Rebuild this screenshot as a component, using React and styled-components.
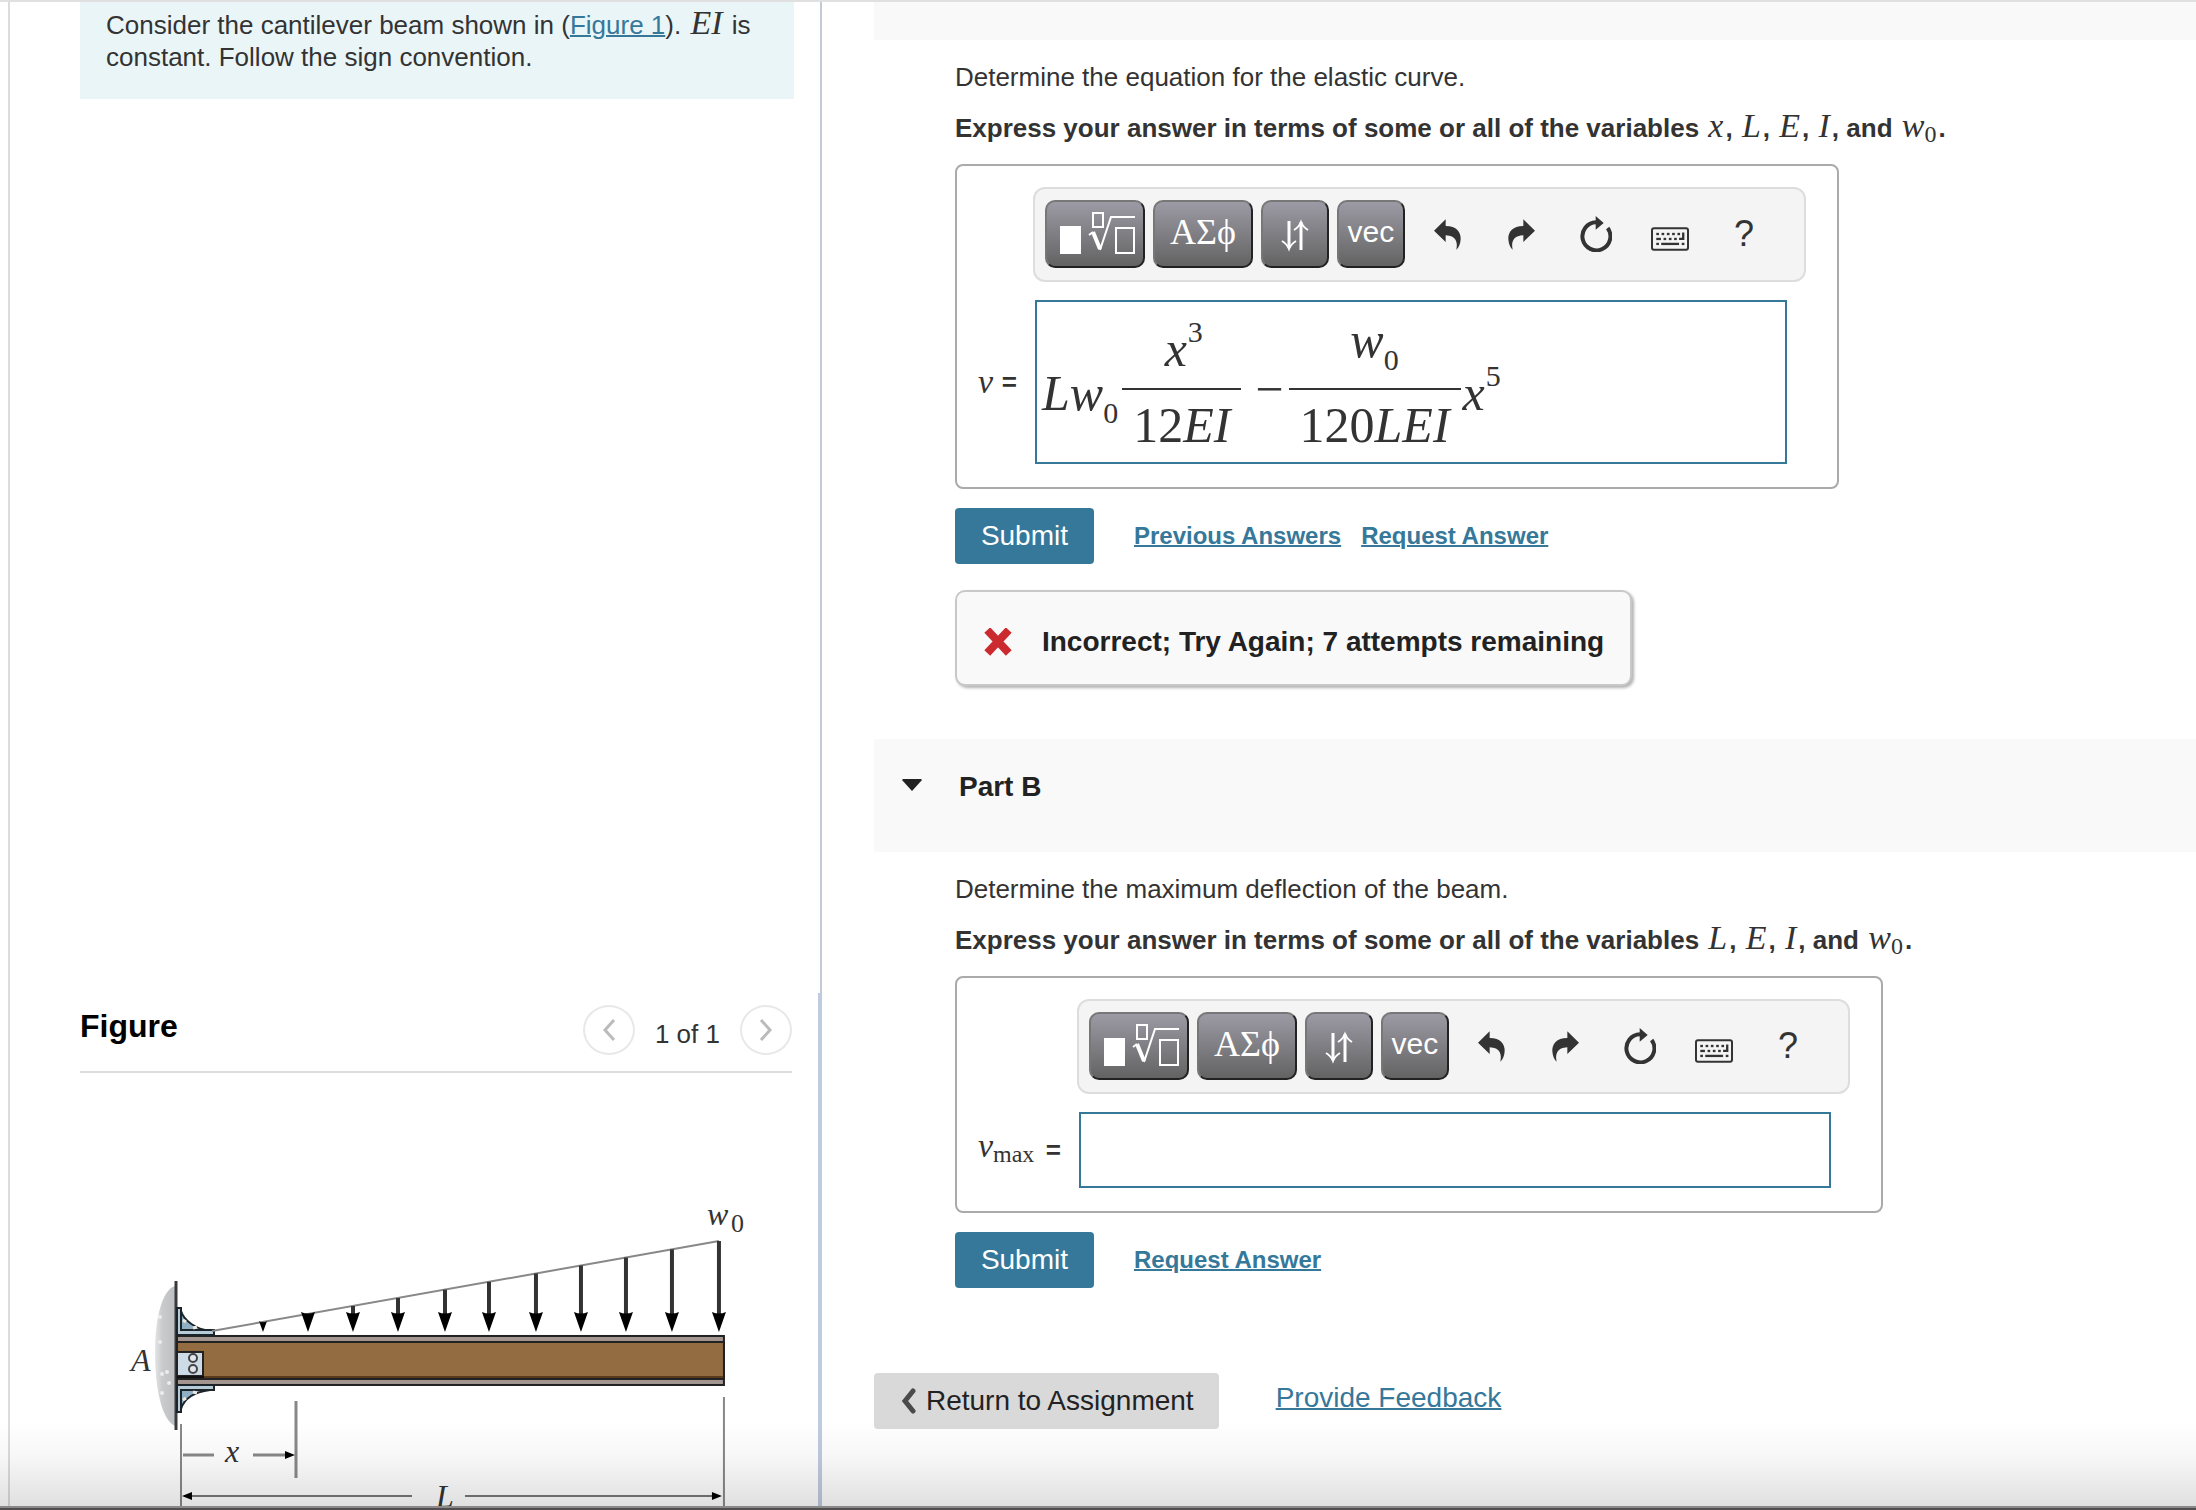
import React from "react";
import styled, { createGlobalStyle } from "styled-components";

const GlobalStyle = createGlobalStyle`
  * {
    box-sizing: border-box;
  }
  body {
    margin: 0;
    font-family: "Liberation Sans", Arial, sans-serif;
    font-size: 26px;
    line-height: 32px;
    color: #333;
    background-color: #fff;
  }
  button, input {
    font-family: inherit;
  }
`;

const Page = styled.div`
  position: relative;
  height: 100vh;
  display: flex;
  flex-direction: column;
  overflow: hidden;
  border-top: 2px solid #e0e0e0;
`;
const Workspace = styled.div`
  flex: 1;
  min-height: 0;
  display: grid;
  grid-template-columns: 37.43% 1fr;
  overflow: hidden;
`;
const DockEdge = styled.div`
  height: 4px;
  background-color: #524e50;
  border-top: 2px solid #8a8a8a;
`;
const DockShade = styled.div`
  position: absolute;
  left: 0;
  right: 0;
  bottom: 4px;
  height: 84px;
  pointer-events: none;
  background: linear-gradient(
    rgba(0, 0, 0, 0),
    rgba(0, 0, 0, 0.03) 40%,
    rgba(0, 0, 0, 0.12)
  );
`;

/* left side */
const LeftPane = styled.aside`
  min-height: 0;
  margin-left: 8px;
  border-left: 2px solid #dcdcdc;
  display: flex;
  flex-direction: column;
`;
const ProblemSection = styled.section`
  flex: 0 0 65.9%;
  padding: 0 26px 0 70px;
  border-right: 2px solid #c2cbd4;
`;
const ProblemText = styled.p`
  margin: 0;
  padding: 7px 26px 26px;
  background-color: #eaf5f8;
`;
const FigureSection = styled.section`
  flex: 1;
  min-height: 0;
  overflow: hidden;
  padding: 12px 26px 0 70px;
  border-right: 4px solid #bfcbdf;
`;
const FigureHeader = styled.div`
  display: flex;
  justify-content: space-between;
  padding-bottom: 16px;
  border-bottom: 2px solid #ddd;
`;
const FigureTitle = styled.h2`
  margin: 0;
  font-size: 32px;
  line-height: 42px;
  color: #000;
`;
const Pager = styled.div`
  display: flex;
  gap: 20px;
`;
const PagerButton = styled.button`
  width: 52px;
  height: 50px;
  padding: 0;
  display: flex;
  align-items: center;
  justify-content: center;
  border: 2px solid #e8e8e8;
  border-radius: 50%;
  background-color: #fff;
`;
const PagerText = styled.span`
  padding-top: 13px;
`;
const BeamDrawing = styled.svg`
  display: block;
  width: 100%;
  margin-top: 117px;
  font-family: "Liberation Serif", "Times New Roman", serif;
`;

/* right side */
const RightPane = styled.main`
  min-width: 0;
  padding-left: 52px;
`;
const PartStrip = styled.div`
  height: 38px;
  background-color: #f9f9f9;
`;
const PartHeader = styled.button`
  width: 100%;
  margin-top: 53px;
  padding: 32px 28px 49px;
  display: flex;
  gap: 37px;
  border: none;
  background-color: #f9f9f9;
  color: #222;
  font-size: 28px;
  font-weight: bold;
  line-height: 32px;
  text-align: left;
`;
const Caret = styled.svg`
  width: 20px;
  height: 12px;
  margin-top: 8px;
`;
const PartBody = styled.section`
  padding: 21px 0 0 81px;
`;
const Question = styled.p`
  margin: 0;
`;
const Instruction = styled.p`
  margin: 19px 0 20px;
  font-weight: bold;
`;
const Var = styled.i`
  padding: 0 2px;
  font-family: "Liberation Serif", "Times New Roman", serif;
  font-size: 34px;
  font-weight: normal;
  line-height: 0;
`;
const VarSub = styled.sub`
  font-size: 24px;
  font-style: normal;
  line-height: 0;
  vertical-align: -5px;
`;
const TextLink = styled.a`
  color: #367899;
  font-size: ${(props) => props.$size || 26}px;
  font-weight: ${(props) => (props.$bold ? "bold" : "normal")};
  text-decoration: underline;
  text-decoration-thickness: 2px;
`;

const AnswerBox = styled.div`
  width: fit-content;
  padding: 21px 31px 23px 21px;
  display: grid;
  grid-template-columns: auto auto;
  gap: 18px 16px;
  border: 2px solid #aaa;
  border-radius: 8px;
`;
const Toolbar = styled.div`
  grid-column: 2;
  padding: 11px 21px 12px 10px;
  display: flex;
  gap: 8px;
  border: 2px solid #ddd;
  border-radius: 12px;
  background-color: #f4f4f4;
`;
const PaletteButton = styled.button`
  width: ${(props) => (props.$wide ? 100 : 68)}px;
  height: 68px;
  padding: ${(props) => (props.$text ? "0 0 4px" : "0")};
  display: flex;
  align-items: center;
  justify-content: center;
  border: 2px solid;
  border-color: #777 #222 #222 #777;
  border-radius: 10px;
  background: linear-gradient(#9c9aa4, #636363);
  color: #fff;
  font-size: 30px;
`;
const Greek = styled.span`
  font-family: "Liberation Serif", "Times New Roman", serif;
  font-size: 36px;
`;
const IconGroup = styled.div`
  display: flex;
`;
const IconButton = styled.button`
  width: 74px;
  height: 68px;
  padding: 0 4px 0 0;
  display: flex;
  align-items: center;
  justify-content: center;
  border: none;
  background: none;
  color: #333;
  font-size: 36px;
`;
const AnswerLabel = styled.label`
  width: ${(props) => props.$width}px;
  display: flex;
  align-items: center;
  justify-content: space-between;

  ${Var} {
    padding: 0;
  }
`;
const Equals = styled.span`
  font-weight: bold;
`;
const answerField = `
  width: 752px;
  margin-left: 2px;
  border: 2px solid #367899;
  border-radius: 0;
  background-color: #fff;
  color: #333;
  font-family: "Liberation Serif", "Times New Roman", serif;
`;
const AnswerInput = styled.input`
  ${answerField}
  height: 76px;
  padding: 0 5px;
  font-size: 50px;
`;
const Formula = styled.div`
  ${answerField}
  height: 164px;
  padding: 14px 5px 0;
  display: flex;
  align-items: center;
  font-size: 50px;
  line-height: 60px;
`;
const Term = styled.span`
  padding-top: 8px;
`;
const Operator = styled.span`
  padding: 0 1px 0 12px;
`;
const Fraction = styled.span`
  margin: 0 2px 0 4px;
  display: grid;
  grid-template-rows: 1fr 2px 1fr;
  text-align: center;
`;
const Numerator = styled.span`
  padding-bottom: ${(props) => (props.$sub ? 18 : 9)}px;
  padding-left: ${(props) => (props.$sub ? 0 : 4)}px;
  align-self: end;
`;
const FractionBar = styled.span`
  background-color: #333;
`;
const Denominator = styled.span`
  padding: 5px 11px 0;
`;
const Sup = styled.sup`
  margin-left: 1px;
  font-size: 30px;
  line-height: 0;
  vertical-align: 24px;
`;
const Sub = styled.sub`
  font-size: 30px;
  line-height: 0;
  vertical-align: -13px;
`;

const ActionRow = styled.div`
  margin-top: 19px;
  display: flex;
  align-items: center;
  gap: 20px;
`;
const SubmitButton = styled.button`
  width: 139px;
  height: 56px;
  margin-right: 20px;
  border: none;
  border-radius: 4px;
  background-color: #367899;
  color: #fff;
  font-size: 28px;
`;
const Feedback = styled.div`
  width: fit-content;
  margin-top: 26px;
  padding: 34px 26px 26px 27px;
  display: flex;
  align-items: center;
  gap: 30px;
  border: 2px solid #c8c8c8;
  border-radius: 10px;
  box-shadow: 2px 2px 3px rgba(0, 0, 0, 0.3);
  background-color: #f9f9f9;
  color: #222;
  font-size: 28px;
  font-weight: bold;
`;
const Footer = styled.footer`
  margin-top: 85px;
  display: flex;
  align-items: center;
  gap: 57px;
`;
const FeedbackLinkWrap = styled.div`
  padding-bottom: 6px;
`;
const ReturnButton = styled.button`
  height: 56px;
  padding: 0 25px 0 27px;
  display: flex;
  align-items: center;
  gap: 10px;
  border: none;
  border-radius: 4px;
  background-color: #d9d9d9;
  color: #222;
  font-size: 28px;
`;

function TemplateIcon() {
  return (
    <svg width="96" height="64" viewBox="2 2 96 64" fill="none" stroke="#fff">
      <rect x="15" y="26" width="21" height="28" fill="#fff" stroke="none" />
      <rect x="48" y="13" width="10" height="14" strokeWidth="2" />
      <path d="M44 35l4-3" strokeWidth="2" />
      <path d="M48 32l7 17" strokeWidth="4" />
      <path d="M55 50L66 17H90" strokeWidth="2" />
      <rect x="71" y="28" width="18" height="25" strokeWidth="2" />
    </svg>
  );
}

function UpDownIcon() {
  return (
    <svg width="64" height="64" viewBox="2 2 64 64" fill="none" stroke="#fff">
      <path d="M28 21V48M40 50V22" strokeWidth="3" />
      <path d="M21 41Q26 44 28 49Q30 44 35 41" strokeWidth="2" />
      <path d="M33 30Q38 27 40 22Q42 27 47 30" strokeWidth="2" />
    </svg>
  );
}

function UndoIcon({ flip }) {
  return (
    <svg width="27" height="31" viewBox="0 0 81 91" fill="currentColor">
      <path
        transform={flip ? "translate(81 0) scale(-1 1)" : undefined}
        d="M0 34L35 0V20C68 20 81 39 80 59C79 74 75 84 67 91C72 69 66 49 35 48V68Z"
      />
    </svg>
  );
}

function ResetIcon() {
  return (
    <svg width="32" height="36" viewBox="0 0 96 108">
      <path
        d="M48 19A42 42 0 1 0 83 36"
        fill="none"
        stroke="currentColor"
        strokeWidth="12"
      />
      <path d="M47 0L71 21L47 41Z" fill="currentColor" />
    </svg>
  );
}

function KeyboardIcon() {
  return (
    <svg width="38" height="34" viewBox="0 -30 115 101" fill="currentColor">
      <rect
        x="3"
        y="3"
        width="109"
        height="65"
        rx="6"
        fill="none"
        stroke="currentColor"
        strokeWidth="6"
      />
      {[16, 32, 48, 64, 80].map((x) => (
        <rect key={x} x={x} y="17" width="8" height="7" />
      ))}
      {[38, 54, 70].map((x) => (
        <rect key={x} x={x} y="32" width="8" height="7" />
      ))}
      <rect x="16" y="32" width="14" height="7" />
      <path d="M94 16H101V39H85V32H94Z" />
      <rect x="16" y="47" width="8" height="7" />
      <rect x="31" y="47" width="54" height="7" />
      <rect x="93" y="47" width="8" height="7" />
    </svg>
  );
}

function MathToolbar() {
  return (
    <Toolbar role="toolbar" aria-label="Math tools">
      <PaletteButton $wide aria-label="Templates">
        <TemplateIcon />
      </PaletteButton>
      <PaletteButton $wide $text>
        <Greek>ΑΣϕ</Greek>
      </PaletteButton>
      <PaletteButton aria-label="Arrows">
        <UpDownIcon />
      </PaletteButton>
      <PaletteButton $text>vec</PaletteButton>
      <IconGroup>
        <IconButton aria-label="Undo">
          <UndoIcon />
        </IconButton>
        <IconButton aria-label="Redo">
          <UndoIcon flip />
        </IconButton>
        <IconButton aria-label="Reset">
          <ResetIcon />
        </IconButton>
        <IconButton aria-label="Keyboard shortcuts">
          <KeyboardIcon />
        </IconButton>
        <IconButton>?</IconButton>
      </IconGroup>
    </Toolbar>
  );
}

// x position of every load arrow, the first one has no room for a full head
const loadArrows = [163, 208, 253, 298, 345, 389, 436, 481, 526, 572, 619];

function Beam() {
  return (
    <BeamDrawing viewBox="-20 0 712 320" role="img" aria-label="Cantilever beam">
      <defs>
        <linearGradient id="wall">
          <stop offset="0" stopColor="#e4e5e6" />
          <stop offset="0.35" stopColor="#c9cbcd" />
          <stop offset="1" stopColor="#bdbfc2" />
        </linearGradient>
      </defs>
      <path
        d="M75 96C62 100 55 128 55 162C55 200 62 230 75 236Z"
        fill="url(#wall)"
      />
      <g fill="#eceded">
        <circle cx="60" cy="127" r="2" />
        <circle cx="60" cy="152" r="2" />
        <circle cx="62" cy="184" r="2" />
        <circle cx="67" cy="182" r="2" />
        <circle cx="69" cy="193" r="2" />
        <circle cx="62" cy="203" r="2" />
      </g>
      <path d="M76 91V240" stroke="#3a3a3a" strokeWidth="3" />

      <g stroke="#222">
        <rect x="77" y="146" width="547" height="49" fill="#a3958f" strokeWidth="2" />
        <rect x="77" y="152" width="547" height="37" fill="#936c41" strokeWidth="2" />
        <rect x="77" y="162" width="26" height="24" fill="#cddbe6" strokeWidth="2" />
      </g>
      <path d="M77 187H623" stroke="#5a3a1a" strokeWidth="2" />
      <path d="M77 187H104" stroke="#111" strokeWidth="2" />
      <g fill="#dfe6ec" stroke="#444" strokeWidth="2">
        <circle cx="93" cy="168" r="4" />
        <circle cx="93" cy="179" r="4" />
      </g>

      <g stroke="#1c242a" strokeWidth="2" fill="#b5cbd8">
        <path d="M81 121C84 131 96 139 110 141H81Z" fill="#8fb0c4" />
        <path d="M77 118H81V140H114V145H77Z" />
        <path d="M81 219C84 209 94 202 110 200H81Z" fill="#8fb0c4" />
        <path d="M77 222H81V200H114V195H77Z" />
      </g>
      <path
        d="M83 130l3 2M93 138l4-1M83 210l3-2M93 202l4 1"
        stroke="#eee6dc"
        strokeWidth="3"
      />

      <path d="M112 141L619 51" stroke="#888" strokeWidth="2" />
      {loadArrows.map((x, i) => {
        const top = 141 - (x - 112) * 0.1775;
        const half = i === 0 ? 4 : 7;
        const head = i === 0 ? 132 : 123;
        return (
          <g key={x}>
            <path d={`M${x} ${top}V${head + 2}`} stroke="#333" strokeWidth="4" />
            <path
              d={`M${x - half} ${head - 1}Q${x} ${head + 2} ${x + half} ${
                head - 1
              }L${x} 142Z`}
            />
          </g>
        );
      })}

      <g stroke="#888" strokeWidth="2">
        <path d="M81 234V320M624 207V320" />
        <path d="M196 211V288M83 265H114M153 265H187" strokeWidth="3" />
      </g>
      <path d="M90 306H312M365 306H614" stroke="#777" strokeWidth="2" />
      <path d="M185 261L195 265L185 269ZM92 302L82 306L92 310ZM612 302L622 306L612 310Z" />

      <g fill="#333" fontSize="32" fontStyle="italic">
        <text x="31" y="181">A</text>
        <text x="125" y="272">x</text>
        <text x="336" y="317">L</text>
        <text x="607" y="35">w</text>
      </g>
      <text x="631" y="42" fontSize="26" fill="#333">
        0
      </text>
    </BeamDrawing>
  );
}

function App() {
  return (
    <>
      <GlobalStyle />
      <Page>
        <Workspace>
          <LeftPane>
            <ProblemSection>
              <ProblemText>
                Consider the cantilever beam shown in (
                <TextLink href="#figure">Figure 1</TextLink>). <Var>EI</Var> is
                constant. Follow the sign convention.
              </ProblemText>
            </ProblemSection>
            <FigureSection id="figure">
              <FigureHeader>
                <FigureTitle>Figure</FigureTitle>
                <Pager>
                  <PagerButton aria-label="Previous figure">
                    <svg width="14" height="24" viewBox="0 0 14 24" fill="none">
                      <path d="M12 2L3 12L12 22" stroke="#bbb" strokeWidth="3" />
                    </svg>
                  </PagerButton>
                  <PagerText>1 of 1</PagerText>
                  <PagerButton aria-label="Next figure">
                    <svg width="14" height="24" viewBox="0 0 14 24" fill="none">
                      <path d="M2 2L11 12L2 22" stroke="#bbb" strokeWidth="3" />
                    </svg>
                  </PagerButton>
                </Pager>
              </FigureHeader>
              <Beam />
            </FigureSection>
          </LeftPane>

          <RightPane>
            <PartStrip />
            <PartBody>
              <Question>Determine the equation for the elastic curve.</Question>
              <Instruction>
                Express your answer in terms of some or all of the variables{" "}
                <Var>x</Var>, <Var>L</Var>, <Var>E</Var>, <Var>I</Var>, and{" "}
                <Var>
                  w<VarSub>0</VarSub>
                </Var>
                .
              </Instruction>
              <AnswerBox>
                <MathToolbar />
                <AnswerLabel as="span" id="label-v" $width={39}>
                  <Var>v</Var>
                  <Equals>=</Equals>
                </AnswerLabel>
                <Formula role="textbox" tabIndex={0} aria-labelledby="label-v">
                  <Term>
                    <i>Lw</i>
                    <Sub>0</Sub>
                  </Term>
                  <Fraction>
                    <Numerator>
                      <i>x</i>
                      <Sup>3</Sup>
                    </Numerator>
                    <FractionBar />
                    <Denominator>
                      12<i>EI</i>
                    </Denominator>
                  </Fraction>
                  <Operator>−</Operator>
                  <Fraction>
                    <Numerator $sub>
                      <i>w</i>
                      <Sub>0</Sub>
                    </Numerator>
                    <FractionBar />
                    <Denominator>
                      120<i>LEI</i>
                    </Denominator>
                  </Fraction>
                  <Term>
                    <i>x</i>
                    <Sup>5</Sup>
                  </Term>
                </Formula>
              </AnswerBox>
              <ActionRow>
                <SubmitButton>Submit</SubmitButton>
                <TextLink href="#previous" $size={24} $bold>
                  Previous Answers
                </TextLink>
                <TextLink href="#request-a" $size={24} $bold>
                  Request Answer
                </TextLink>
              </ActionRow>
              <Feedback role="status">
                <svg width="28" height="28" viewBox="0 0 28 28">
                  <path
                    d="M6 5L22 22M22 5L6 22"
                    stroke="#cb2a2f"
                    strokeWidth="8"
                    strokeLinecap="square"
                  />
                </svg>
                Incorrect; Try Again; 7 attempts remaining
              </Feedback>
            </PartBody>

            <PartHeader aria-expanded="true">
              <Caret viewBox="0 0 20 12">
                <path d="M1 0H19L20 1L10 12L0 1Z" fill="#222" />
              </Caret>
              Part B
            </PartHeader>
            <PartBody>
              <Question>Determine the maximum deflection of the beam.</Question>
              <Instruction>
                Express your answer in terms of some or all of the variables{" "}
                <Var>L</Var>, <Var>E</Var>, <Var>I</Var>, and{" "}
                <Var>
                  w<VarSub>0</VarSub>
                </Var>
                .
              </Instruction>
              <AnswerBox>
                <MathToolbar />
                <AnswerLabel htmlFor="vmax" $width={83}>
                  <Var>
                    v<VarSub>max</VarSub>
                  </Var>
                  <Equals>=</Equals>
                </AnswerLabel>
                <AnswerInput id="vmax" type="text" />
              </AnswerBox>
              <ActionRow>
                <SubmitButton>Submit</SubmitButton>
                <TextLink href="#request-b" $size={24} $bold>
                  Request Answer
                </TextLink>
              </ActionRow>
            </PartBody>

            <Footer>
              <ReturnButton>
                <svg width="15" height="26" viewBox="0 0 15 26" fill="none">
                  <path
                    d="M12 3L4 13L12 23"
                    stroke="#4a4a4a"
                    strokeWidth="5"
                    strokeLinecap="round"
                  />
                </svg>
                Return to Assignment
              </ReturnButton>
              <FeedbackLinkWrap>
                <TextLink href="#feedback" $size={28}>
                  Provide Feedback
                </TextLink>
              </FeedbackLinkWrap>
            </Footer>
          </RightPane>
        </Workspace>
        <DockEdge />
        <DockShade />
      </Page>
    </>
  );
}

export default App;
